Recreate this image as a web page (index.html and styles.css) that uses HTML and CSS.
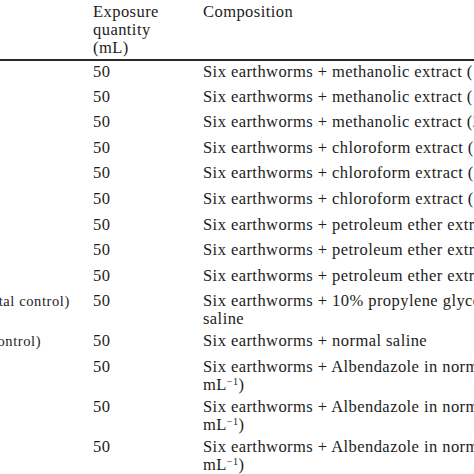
FILE: index.html
```html
<!DOCTYPE html>
<html lang="en">
<head>
<meta charset="utf-8">
<title>Table</title>
<link rel="stylesheet" href="styles.css">
</head>
<body>
<div class="wrap">
<table class="data">
  <colgroup>
    <col class="c-group">
    <col class="c-qty">
    <col class="c-comp">
  </colgroup>
  <thead>
    <tr>
      <th>Groups</th>
      <th>Exposure<br>quantity<br>(mL)</th>
      <th>Composition</th>
    </tr>
  </thead>
  <tbody>
    <tr><td class="grp">Group 1</td><td>50</td><td class="comp">Six earthworms + methanolic extract (10 mg mL<sup>−1</sup>)</td></tr>
    <tr><td class="grp">Group 2</td><td>50</td><td class="comp">Six earthworms + methanolic extract (15 mg mL<sup>−1</sup>)</td></tr>
    <tr><td class="grp">Group 3</td><td>50</td><td class="comp">Six earthworms + methanolic extract (20 mg mL<sup>−1</sup>)</td></tr>
    <tr><td class="grp">Group 4</td><td>50</td><td class="comp">Six earthworms + chloroform extract (10 mg mL<sup>−1</sup>)</td></tr>
    <tr><td class="grp">Group 5</td><td>50</td><td class="comp">Six earthworms + chloroform extract (15 mg mL<sup>−1</sup>)</td></tr>
    <tr><td class="grp">Group 6</td><td>50</td><td class="comp">Six earthworms + chloroform extract (20 mg mL<sup>−1</sup>)</td></tr>
    <tr><td class="grp">Group 7</td><td>50</td><td class="comp">Six earthworms + petroleum ether extract (10 mg mL<sup>−1</sup>)</td></tr>
    <tr><td class="grp">Group 8</td><td>50</td><td class="comp">Six earthworms + petroleum ether extract (15 mg mL<sup>−1</sup>)</td></tr>
    <tr><td class="grp">Group 9</td><td>50</td><td class="comp">Six earthworms + petroleum ether extract (20 mg mL<sup>−1</sup>)</td></tr>
    <tr><td class="grp">Group 10 (Experimental control)</td><td>50</td><td class="comp">Six earthworms + 10% propylene glycol in normal<br>saline</td></tr>
    <tr><td class="grp">Group 11 (Negative control)</td><td>50</td><td class="comp">Six earthworms + normal saline</td></tr>
    <tr><td class="grp">Group 12</td><td>50</td><td class="comp">Six earthworms + Albendazole in normal saline (10 mg<br>mL<sup>−1</sup>)</td></tr>
    <tr><td class="grp">Group 13</td><td>50</td><td class="comp">Six earthworms + Albendazole in normal saline (15 mg<br>mL<sup>−1</sup>)</td></tr>
    <tr><td class="grp">Group 14</td><td>50</td><td class="comp">Six earthworms + Albendazole in normal saline (20 mg<br>mL<sup>−1</sup>)</td></tr>
  </tbody>
</table>
</div>
</body>
</html>
```

FILE: styles.css
```css
html, body {
  margin: 0;
  padding: 0;
  background: #ffffff;
  overflow: hidden;
}
.wrap {
  margin-left: -240px;
  width: 1000px;
}
.data {
  border-collapse: collapse;
  table-layout: fixed;
  width: 760px;
  font-family: "Liberation Serif", "Times New Roman", serif;
  font-size: 16.5px;
  letter-spacing: 0.44px;
  color: #1c1c1c;
}
.c-group { width: 333px; }
.c-qty { width: 110px; }
.c-comp { width: 317px; }
.data th {
  font-weight: normal;
  text-align: left;
  vertical-align: top;
  line-height: 18px;
  padding: 3px 0 2px 0;
  border-bottom: 2px solid #2a2a2a;
}
.data tbody tr {
  height: 25.6px;
}
.data td {
  vertical-align: top;
  line-height: 18px;
  padding: 2px 0 2px 0;
  white-space: nowrap;
}
.data td.grp {
  font-size: 14.5px;
  letter-spacing: 0.6px;
  text-align: left;
  padding-left: 100px;
  overflow: hidden;
}
.data sup {
  font-size: 0.62em;
  line-height: 0;
  vertical-align: 0.45em;
}
```
